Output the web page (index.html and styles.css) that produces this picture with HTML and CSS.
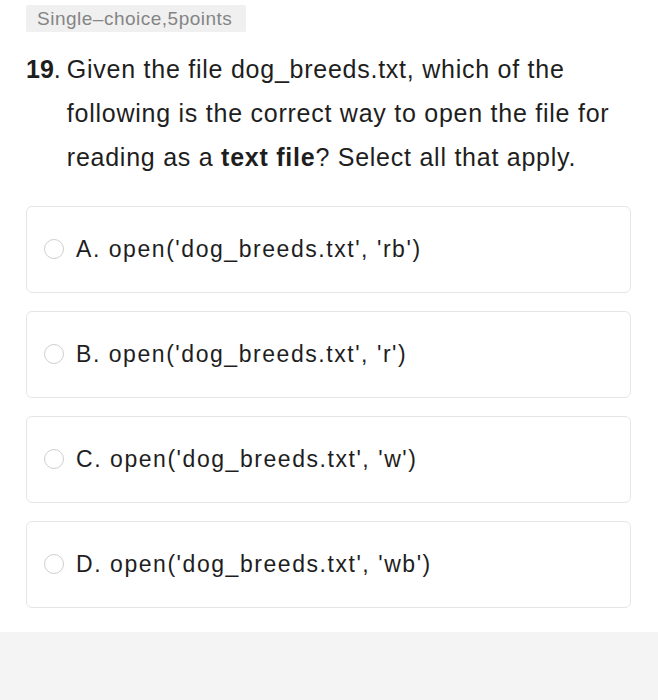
FILE: index.html
```html
<!DOCTYPE html>
<html>
<head>
<meta charset="utf-8">
<link rel="stylesheet" href="styles.css">
</head>
<body>
<div class="page">
  <div class="content">
    <div class="tag">Single–choice,5points</div>
    <div class="question">
      <span class="num">19</span><span class="dot">.</span>
      <div class="qtext">Given the file dog_breeds.txt, which of the following is the correct way to open the file for reading as a <b>text file</b>? Select all that apply.</div>
    </div>
    <div class="options">
      <div class="option"><span class="radio"></span><span class="label">A. open('dog_breeds.txt', 'rb')</span></div>
      <div class="option"><span class="radio"></span><span class="label">B. open('dog_breeds.txt', 'r')</span></div>
      <div class="option"><span class="radio"></span><span class="label">C. open('dog_breeds.txt', 'w')</span></div>
      <div class="option"><span class="radio"></span><span class="label">D. open('dog_breeds.txt', 'wb')</span></div>
    </div>
  </div>
  <div class="footer"></div>
</div>
</body>
</html>
```
FILE: styles.css
```css
html, body {
  margin: 0;
  padding: 0;
  background: #ffffff;
}
body {
  font-family: "Liberation Sans", Arial, sans-serif;
  color: #222;
}
.page {
  width: 658px;
  height: 700px;
  display: flex;
  flex-direction: column;
}
.content {
  height: 632px;
  padding: 5px 27px 0 26px;
  box-sizing: border-box;
}
.tag {
  display: inline-block;
  background: #f0f0f0;
  color: #858585;
  font-size: 19px;
  letter-spacing: 0.5px;
  line-height: 27px;
  padding: 0 14px 0 11px;
  border-radius: 2px;
}
.question {
  display: flex;
  font-size: 25px;
  letter-spacing: 0.75px;
  line-height: 44px;
  margin-top: 15px;
  color: #1e1e1e;
}
.num {
  font-weight: bold;
  letter-spacing: 0;
}
.dot {
  width: 13px;
}
.qtext {
  flex: 1;
}
.qtext b {
  font-weight: bold;
}
.options {
  display: flex;
  flex-direction: column;
  gap: 18px;
  margin-top: 27px;
}
.option {
  height: 87px;
  border: 1px solid #e6e6e6;
  border-radius: 6px;
  box-sizing: border-box;
  display: flex;
  align-items: center;
  padding-left: 17px;
  gap: 12px;
}
.radio {
  width: 20px;
  height: 20px;
  border: 1px solid #cfcfcf;
  border-radius: 50%;
  box-sizing: border-box;
  flex: none;
  margin-top: -2px;
}
.label {
  font-size: 23px;
  letter-spacing: 1.55px;
  color: #1e1e1e;
}
.footer {
  flex: 1;
  background: #f4f4f4;
}
```
